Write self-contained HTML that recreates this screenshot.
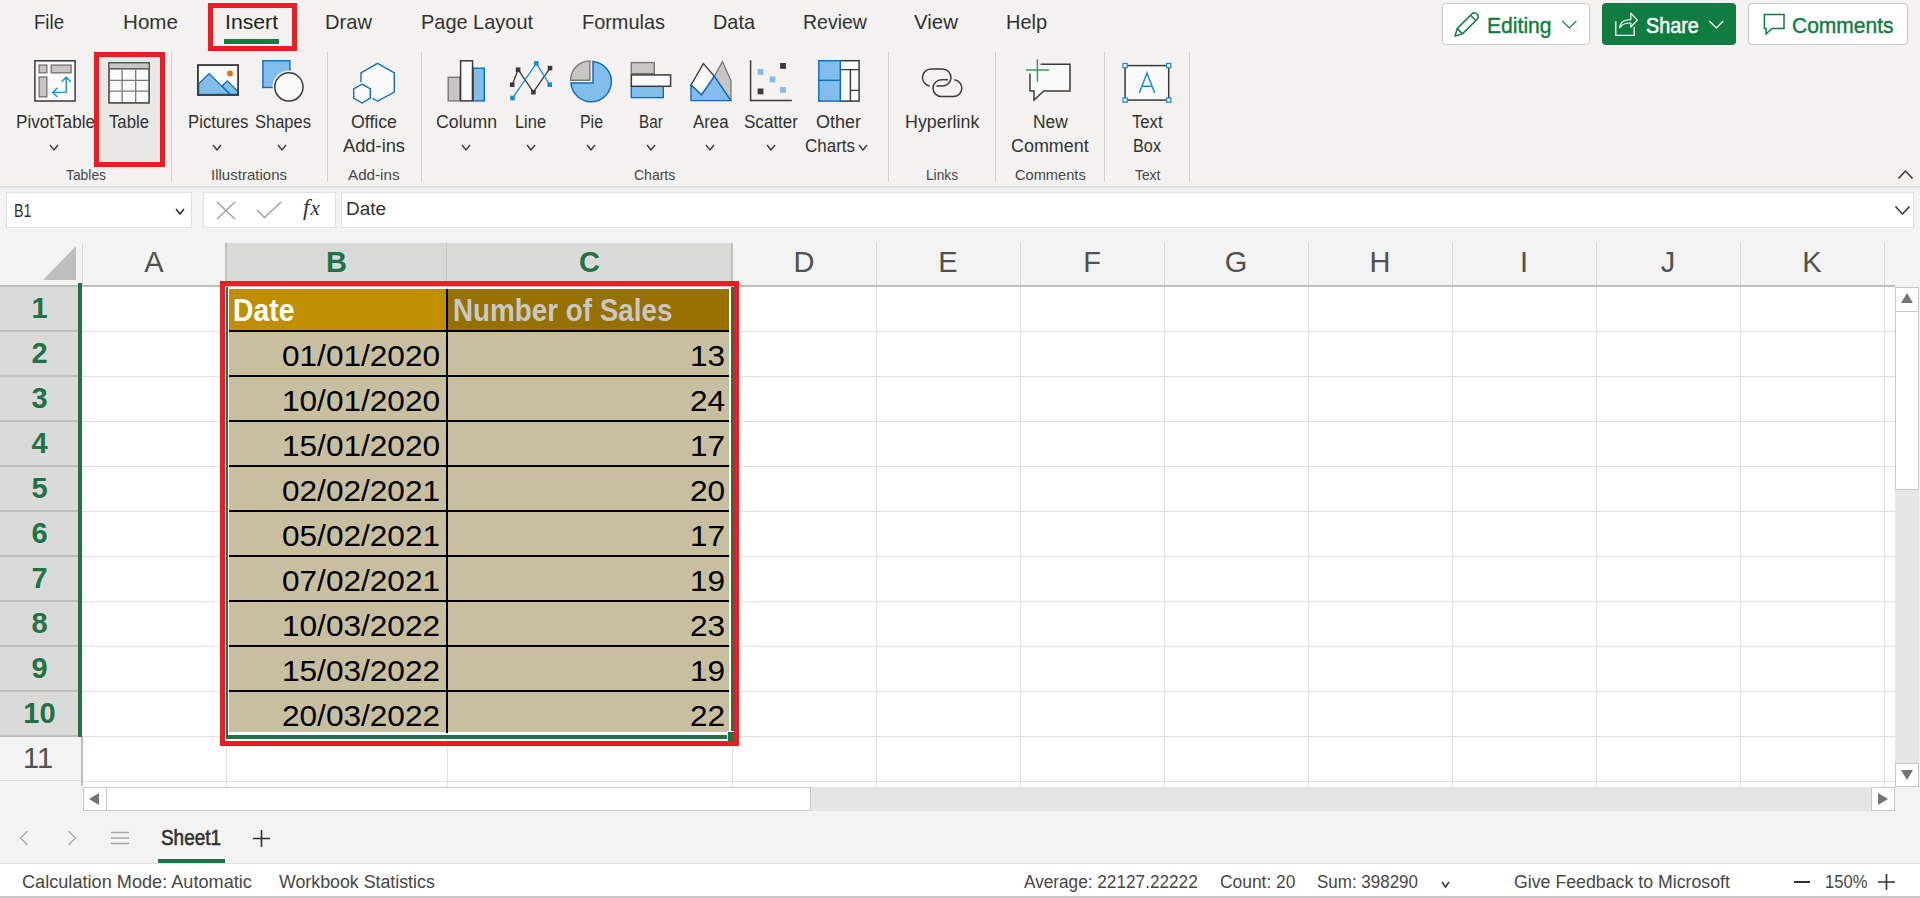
<!DOCTYPE html>
<html><head><meta charset="utf-8"><style>
html,body{margin:0;padding:0;}
body{width:1920px;height:898px;overflow:hidden;position:relative;background:#f3f3f3;font-family:'Liberation Sans',sans-serif;}
.t{position:absolute;line-height:1;white-space:nowrap;}
.r{position:absolute;box-sizing:content-box;}
svg.r{overflow:visible;}
</style></head><body>
<div class="r" style="left:0px;top:0px;width:1920px;height:186px;background:#f3f2f1;"></div>
<div class="r" style="left:0px;top:186px;width:1920px;height:4px;background:linear-gradient(#dcdbda,#f3f3f3);"></div>
<div class="r" style="left:0px;top:190px;width:1920px;height:53px;background:#f3f3f3;"></div>
<div class="t" style="left:34.00px;top:11.15px;font-size:21px;color:#323130;font-weight:normal;transform:scaleX(0.8859);transform-origin:0 0;">File</div>
<div class="t" style="left:123.00px;top:11.15px;font-size:21px;color:#323130;font-weight:normal;transform:scaleX(0.9818);transform-origin:0 0;">Home</div>
<div class="t" style="left:225.00px;top:11.15px;font-size:21px;color:#201f1e;font-weight:normal;transform:scaleX(1.0095);transform-origin:0 0;">Insert</div>
<div class="t" style="left:325.00px;top:11.15px;font-size:21px;color:#323130;font-weight:normal;transform:scaleX(0.9575);transform-origin:0 0;">Draw</div>
<div class="t" style="left:421.00px;top:11.15px;font-size:21px;color:#323130;font-weight:normal;transform:scaleX(0.9498);transform-origin:0 0;">Page Layout</div>
<div class="t" style="left:582.00px;top:11.15px;font-size:21px;color:#323130;font-weight:normal;transform:scaleX(0.9484);transform-origin:0 0;">Formulas</div>
<div class="t" style="left:713.00px;top:11.15px;font-size:21px;color:#323130;font-weight:normal;transform:scaleX(0.9467);transform-origin:0 0;">Data</div>
<div class="t" style="left:803.00px;top:11.15px;font-size:21px;color:#323130;font-weight:normal;transform:scaleX(0.9284);transform-origin:0 0;">Review</div>
<div class="t" style="left:914.00px;top:11.15px;font-size:21px;color:#323130;font-weight:normal;transform:scaleX(0.9734);transform-origin:0 0;">View</div>
<div class="t" style="left:1006.00px;top:11.15px;font-size:21px;color:#323130;font-weight:normal;transform:scaleX(0.9489);transform-origin:0 0;">Help</div>
<div class="r" style="left:224px;top:39px;width:55px;height:5px;background:#107c41;"></div>
<div class="r" style="left:1442px;top:3px;width:146px;height:40px;border:1px solid #c8c6c4;background:#ffffff;border-radius:4px;"></div>
<div class="t" style="left:1486.70px;top:15.10px;font-size:22px;color:#107c41;font-weight:normal;transform:scaleX(0.9596);transform-origin:0 0;-webkit-text-stroke:0.4px #107c41;">Editing</div>
<div class="r" style="left:1602px;top:3px;width:134px;height:42px;background:#107c41;border-radius:4px;"></div>
<div class="t" style="left:1646.00px;top:15.10px;font-size:22px;color:#ffffff;font-weight:normal;transform:scaleX(0.8989);transform-origin:0 0;-webkit-text-stroke:0.5px #fff;">Share</div>
<div class="r" style="left:1748px;top:3px;width:158px;height:40px;border:1px solid #c8c6c4;background:#ffffff;border-radius:4px;"></div>
<div class="t" style="left:1792.40px;top:15.10px;font-size:22px;color:#107c41;font-weight:normal;transform:scaleX(0.9552);transform-origin:0 0;-webkit-text-stroke:0.4px #107c41;">Comments</div>
<div class="r" style="left:171px;top:52px;width:1px;height:130px;background:#d2d0ce;"></div>
<div class="r" style="left:327px;top:52px;width:1px;height:130px;background:#d2d0ce;"></div>
<div class="r" style="left:421px;top:52px;width:1px;height:130px;background:#d2d0ce;"></div>
<div class="r" style="left:888px;top:52px;width:1px;height:130px;background:#d2d0ce;"></div>
<div class="r" style="left:995px;top:52px;width:1px;height:130px;background:#d2d0ce;"></div>
<div class="r" style="left:1104px;top:52px;width:1px;height:130px;background:#d2d0ce;"></div>
<div class="r" style="left:1189px;top:52px;width:1px;height:130px;background:#d2d0ce;"></div>
<div class="r" style="left:99px;top:57px;width:61px;height:105px;background:#e9e8e7;"></div>
<div class="t" style="left:15.50px;top:114.12px;font-size:17.5px;color:#323130;font-weight:normal;transform:scaleX(0.9782);transform-origin:0 0;">PivotTable</div>
<div class="t" style="left:109.00px;top:114.12px;font-size:17.5px;color:#323130;font-weight:normal;transform:scaleX(0.9564);transform-origin:0 0;">Table</div>
<div class="t" style="left:187.50px;top:114.12px;font-size:17.5px;color:#323130;font-weight:normal;transform:scaleX(0.9570);transform-origin:0 0;">Pictures</div>
<div class="t" style="left:255.00px;top:114.12px;font-size:17.5px;color:#323130;font-weight:normal;transform:scaleX(0.9433);transform-origin:0 0;">Shapes</div>
<div class="t" style="left:350.75px;top:114.12px;font-size:17.5px;color:#323130;font-weight:normal;transform:scaleX(1.0129);transform-origin:0 0;">Office</div>
<div class="t" style="left:342.50px;top:137.62px;font-size:17.5px;color:#323130;font-weight:normal;transform:scaleX(1.0451);transform-origin:0 0;">Add-ins</div>
<div class="t" style="left:436.00px;top:114.12px;font-size:17.5px;color:#323130;font-weight:normal;transform:scaleX(1.0118);transform-origin:0 0;">Column</div>
<div class="t" style="left:515.00px;top:114.12px;font-size:17.5px;color:#323130;font-weight:normal;transform:scaleX(0.9373);transform-origin:0 0;">Line</div>
<div class="t" style="left:579.50px;top:114.12px;font-size:17.5px;color:#323130;font-weight:normal;transform:scaleX(0.9095);transform-origin:0 0;">Pie</div>
<div class="t" style="left:638.75px;top:114.12px;font-size:17.5px;color:#323130;font-weight:normal;transform:scaleX(0.8728);transform-origin:0 0;">Bar</div>
<div class="t" style="left:692.50px;top:114.12px;font-size:17.5px;color:#323130;font-weight:normal;transform:scaleX(0.9603);transform-origin:0 0;">Area</div>
<div class="t" style="left:744.00px;top:114.12px;font-size:17.5px;color:#323130;font-weight:normal;transform:scaleX(0.9742);transform-origin:0 0;">Scatter</div>
<div class="t" style="left:816.00px;top:114.12px;font-size:17.5px;color:#323130;font-weight:normal;transform:scaleX(1.0286);transform-origin:0 0;">Other</div>
<div class="t" style="left:805.00px;top:137.62px;font-size:17.5px;color:#323130;font-weight:normal;transform:scaleX(0.9702);transform-origin:0 0;">Charts</div>
<div class="t" style="left:905.00px;top:114.12px;font-size:17.5px;color:#323130;font-weight:normal;transform:scaleX(1.0195);transform-origin:0 0;">Hyperlink</div>
<div class="t" style="left:1032.80px;top:114.12px;font-size:17.5px;color:#323130;font-weight:normal;transform:scaleX(0.9930);transform-origin:0 0;">New</div>
<div class="t" style="left:1011.00px;top:137.62px;font-size:17.5px;color:#323130;font-weight:normal;transform:scaleX(1.0242);transform-origin:0 0;">Comment</div>
<div class="t" style="left:1132.00px;top:114.12px;font-size:17.5px;color:#323130;font-weight:normal;transform:scaleX(0.9529);transform-origin:0 0;">Text</div>
<div class="t" style="left:1133.00px;top:137.62px;font-size:17.5px;color:#323130;font-weight:normal;transform:scaleX(0.9289);transform-origin:0 0;">Box</div>
<div class="t" style="left:65.50px;top:168.18px;font-size:14.5px;color:#484644;font-weight:normal;transform:scaleX(0.9545);transform-origin:0 0;">Tables</div>
<div class="t" style="left:211.00px;top:168.18px;font-size:14.5px;color:#484644;font-weight:normal;transform:scaleX(1.0364);transform-origin:0 0;">Illustrations</div>
<div class="t" style="left:348.00px;top:168.18px;font-size:14.5px;color:#484644;font-weight:normal;transform:scaleX(1.0477);transform-origin:0 0;">Add-ins</div>
<div class="t" style="left:633.75px;top:168.18px;font-size:14.5px;color:#484644;font-weight:normal;transform:scaleX(0.9660);transform-origin:0 0;">Charts</div>
<div class="t" style="left:926.00px;top:168.18px;font-size:14.5px;color:#484644;font-weight:normal;transform:scaleX(0.9451);transform-origin:0 0;">Links</div>
<div class="t" style="left:1014.70px;top:168.18px;font-size:14.5px;color:#484644;font-weight:normal;transform:scaleX(1.0085);transform-origin:0 0;">Comments</div>
<div class="t" style="left:1134.60px;top:168.18px;font-size:14.5px;color:#484644;font-weight:normal;transform:scaleX(0.9546);transform-origin:0 0;">Text</div>
<svg class="r" style="left:49.0px;top:143.5px;" width="10" height="7" viewBox="0 0 10 7"><path d="M1 1 L5.0 6 L9 1" fill="none" stroke="#323130" stroke-width="1.3"/></svg>
<svg class="r" style="left:212.25px;top:143.5px;" width="10" height="7" viewBox="0 0 10 7"><path d="M1 1 L5.0 6 L9 1" fill="none" stroke="#323130" stroke-width="1.3"/></svg>
<svg class="r" style="left:277.25px;top:143.5px;" width="10" height="7" viewBox="0 0 10 7"><path d="M1 1 L5.0 6 L9 1" fill="none" stroke="#323130" stroke-width="1.3"/></svg>
<svg class="r" style="left:461.0px;top:143.5px;" width="10" height="7" viewBox="0 0 10 7"><path d="M1 1 L5.0 6 L9 1" fill="none" stroke="#323130" stroke-width="1.3"/></svg>
<svg class="r" style="left:525.5px;top:143.5px;" width="10" height="7" viewBox="0 0 10 7"><path d="M1 1 L5.0 6 L9 1" fill="none" stroke="#323130" stroke-width="1.3"/></svg>
<svg class="r" style="left:586.0px;top:143.5px;" width="10" height="7" viewBox="0 0 10 7"><path d="M1 1 L5.0 6 L9 1" fill="none" stroke="#323130" stroke-width="1.3"/></svg>
<svg class="r" style="left:645.5px;top:143.5px;" width="10" height="7" viewBox="0 0 10 7"><path d="M1 1 L5.0 6 L9 1" fill="none" stroke="#323130" stroke-width="1.3"/></svg>
<svg class="r" style="left:705.25px;top:143.5px;" width="10" height="7" viewBox="0 0 10 7"><path d="M1 1 L5.0 6 L9 1" fill="none" stroke="#323130" stroke-width="1.3"/></svg>
<svg class="r" style="left:766.0px;top:143.5px;" width="10" height="7" viewBox="0 0 10 7"><path d="M1 1 L5.0 6 L9 1" fill="none" stroke="#323130" stroke-width="1.3"/></svg>
<svg class="r" style="left:857.5px;top:144.0px;" width="10" height="7" viewBox="0 0 10 7"><path d="M1 1 L5.0 6 L9 1" fill="none" stroke="#323130" stroke-width="1.3"/></svg>
<svg class="r" style="left:1897px;top:169px;" width="17" height="11" viewBox="0 0 17 11"><path d="M1.5 9.5 L8.5 2 L15.5 9.5" fill="none" stroke="#323130" stroke-width="1.5"/></svg>
<svg class="r" style="left:0;top:0" width="1920" height="190"><rect x="34.9" y="60.8" width="40.2" height="40.2" fill="#fafafa" stroke="#3b3a39" stroke-width="1.5"/><rect x="39.1" y="65.1" width="7.7" height="7.7" fill="#c8c6c4" stroke="#7a7876" stroke-width="1.4"/><rect x="51.2" y="65.1" width="19.9" height="7.7" fill="#c8c6c4" stroke="#7a7876" stroke-width="1.4"/><rect x="39.1" y="77" width="7.7" height="19.8" fill="#c8c6c4" stroke="#7a7876" stroke-width="1.4"/><path d="M66.2 77.2 V92.4 H52.8 M61.6 81.8 L66.2 77.2 L70.8 81.8 M57.4 87.8 L52.8 92.4 L57.4 97" fill="none" stroke="#1e8ad6" stroke-width="1.4"/><rect x="109" y="62.9" width="40.1" height="40" fill="#fafafa" stroke="#3b3a39" stroke-width="1.5"/><rect x="109.7" y="63.6" width="38.7" height="5" fill="#c8c6c4"/><path d="M109.7 68.9 H148.4" stroke="#3b3a39" stroke-width="1.3"/><path d="M122.1 69.5 V102.2 M135.7 69.5 V102.2 M109.7 80.4 H148.4 M109.7 91.2 H148.4" stroke="#7a7876" stroke-width="1.3"/><rect x="197.9" y="65.1" width="40.3" height="29.9" fill="#fafafa" stroke="#3b3a39" stroke-width="1.5"/><path d="M198.6 84 L209.1 73.6 L230 94.3 H198.6 Z" fill="#83bdeb" stroke="#0f6cbd" stroke-width="1.3" stroke-linejoin="miter"/><path d="M222 86 L227.2 80.8 L237.5 91 V94.3 H230.2 Z" fill="#83bdeb" stroke="#0f6cbd" stroke-width="1.3"/><rect x="197.9" y="65.1" width="40.3" height="29.9" fill="none" stroke="#3b3a39" stroke-width="1.5"/><circle cx="230" cy="73.5" r="2.9" fill="#e3700c"/><rect x="262.9" y="60.7" width="27" height="26.8" fill="#83bdeb" stroke="#0f6cbd" stroke-width="1.4"/><circle cx="288.9" cy="86.9" r="16.3" fill="#f3f2f1"/><circle cx="288.9" cy="86.9" r="14.1" fill="#fafafa" stroke="#3b3a39" stroke-width="1.5"/><path d="M377.6 63.4 L394.3 73 V92 L377.6 101 L361 92 V73 Z" fill="#fafafa" stroke="#0f6cbd" stroke-width="1.4"/><path d="M362 81.5 L372.5 87.5 V99.5 L362 105.5 L351.5 99.5 V87.5 Z" fill="#f3f2f1"/><path d="M362 84.2 L370.3 89 V98.2 L362 103 L353.7 98.2 V89 Z" fill="#fafafa" stroke="#0f6cbd" stroke-width="1.4"/><rect x="448.2" y="77.3" width="11.7" height="23.6" fill="#c8c6c4" stroke="#7a7876" stroke-width="1.4"/><rect x="460.6" y="60.8" width="12" height="40.1" fill="#fafafa" stroke="#3b3a39" stroke-width="1.5"/><rect x="473.3" y="68.2" width="11" height="32.7" fill="#83bdeb" stroke="#0f6cbd" stroke-width="1.4"/><path d="M472.6 68.2 V100.9" stroke="#3b3a39" stroke-width="1.5"/><path d="M512.3 84.7 L518.1 69.7 L533.4 92.2 L550 68.1" fill="none" stroke="#3b3a39" stroke-width="1.3"/><path d="M512.5 98.1 L536.3 63.4 L549.7 84.7" fill="none" stroke="#1e8ad6" stroke-width="1.3"/><rect x="509.90000000000003" y="82.4" width="4.6" height="4.6" fill="#3b3a39"/><rect x="515.8000000000001" y="67.4" width="4.6" height="4.6" fill="#3b3a39"/><rect x="531.1" y="89.9" width="4.6" height="4.6" fill="#3b3a39"/><rect x="547.7" y="65.8" width="4.6" height="4.6" fill="#3b3a39"/><rect x="510.2" y="95.8" width="4.6" height="4.6" fill="#1e8ad6"/><rect x="534.0" y="61.1" width="4.6" height="4.6" fill="#1e8ad6"/><rect x="547.4000000000001" y="82.4" width="4.6" height="4.6" fill="#1e8ad6"/><path d="M593 61.4 A20.2 20.2 0 1 1 571 83 H593 Z" fill="#83bdeb" stroke="#0f6cbd" stroke-width="1.5" stroke-linejoin="miter"/><path d="M589.9 60.9 A19.5 19.5 0 0 0 570.6 80.2 H589.9 Z" fill="#c8c6c4" stroke="#7a7876" stroke-width="1.4"/><rect x="631.3" y="62.6" width="23" height="11" fill="#c8c6c4" stroke="#7a7876" stroke-width="1.4"/><rect x="631.3" y="86.3" width="32" height="11.3" fill="#83bdeb" stroke="#0f6cbd" stroke-width="1.4"/><rect x="631.3" y="74.9" width="39.3" height="11.4" fill="#fafafa" stroke="#3b3a39" stroke-width="1.5"/><path d="M714.4 76.3 L722.5 61.6 L731 81 V100.6 Z" fill="#c8c6c4" stroke="#7a7876" stroke-width="1.3" stroke-linejoin="round"/><path d="M691 85 L703.4 63.6 L714.4 76.3 L701.6 95 Z" fill="#fafafa" stroke="#3b3a39" stroke-width="1.4"/><path d="M691 85 L701.6 95 L714.4 76.3 L730.8 100.6 H691 Z" fill="#83bdeb" stroke="#0f6cbd" stroke-width="1.4" stroke-linejoin="miter"/><path d="M750.6 60.3 V100.6 H791.9" fill="none" stroke="#3b3a39" stroke-width="1.5"/><rect x="757.6" y="69.0" width="5.8" height="5.8" fill="#83bdeb"/><rect x="769.6" y="76.5" width="5.8" height="5.8" fill="#83bdeb"/><rect x="780.1" y="63.00000000000001" width="5.8" height="5.8" fill="#3b3a39"/><rect x="757.6" y="88.5" width="5.8" height="5.8" fill="#3b3a39"/><rect x="780.1" y="87.1" width="5.8" height="5.8" fill="#83bdeb"/><rect x="840.3" y="60.7" width="18.8" height="40.4" fill="#fafafa" stroke="#3b3a39" stroke-width="1.5"/><path d="M840.3 69.6 H859.1 M850.4 69.6 V101.1 M850.4 90.4 H859.1" stroke="#3b3a39" stroke-width="1.4"/><rect x="818.8" y="60.7" width="21.5" height="40.4" fill="#83bdeb" stroke="#0f6cbd" stroke-width="1.4"/><path d="M818.8 80.3 H840.3" stroke="#0f6cbd" stroke-width="1.4"/><path d="M936.4 86 H942.55 A8.45 8.45 0 0 0 942.55 69.1 H930.85 A8.45 8.45 0 0 0 929.6 85.9" fill="none" stroke="#3b3a39" stroke-width="1.5"/><path d="M954.3 79.75 A8.45 8.45 0 0 1 953.45 96.6 H941.45 A8.45 8.45 0 0 1 941.45 79.7 H947.9" fill="none" stroke="#3b3a39" stroke-width="1.5"/><path d="M1030 73.4 V90.9 H1034 V100 L1043.7 90.9 H1070 V64.2 H1040.6" fill="#fafafa" stroke="#3b3a39" stroke-width="1.5"/><rect x="1030.7" y="64.9" width="11" height="10" fill="#fafafa"/><path d="M1037.4 59.2 V81.7 M1026.1 70.1 H1049" stroke="#31a24f" stroke-width="1.5"/><rect x="1125.1" y="65.6" width="43.6" height="34.5" fill="#fafafa" stroke="#3b3a39" stroke-width="1.5"/><rect x="1123.0" y="63.49999999999999" width="4.2" height="4.2" fill="#ffffff" stroke="#1e8ad6" stroke-width="1.3"/><rect x="1166.6000000000001" y="63.49999999999999" width="4.2" height="4.2" fill="#ffffff" stroke="#1e8ad6" stroke-width="1.3"/><rect x="1123.0" y="98.0" width="4.2" height="4.2" fill="#ffffff" stroke="#1e8ad6" stroke-width="1.3"/><rect x="1166.6000000000001" y="98.0" width="4.2" height="4.2" fill="#ffffff" stroke="#1e8ad6" stroke-width="1.3"/><path d="M1139.3 93 L1147 73 L1154.7 93 M1142.3 86.2 H1151.7" fill="none" stroke="#1e8ad6" stroke-width="1.5"/><path d="M1455 36 L1457.2 28.6 L1471.8 14 A3.75 3.75 0 0 1 1477.1 19.3 L1462.5 33.9 Z M1457.2 28.6 L1462.5 33.9 M1470.6 15.3 L1475.8 20.5" fill="none" stroke="#107c41" stroke-width="1.5" stroke-linejoin="round"/><path d="M1562.2 20.8 L1569.3 27.9 L1576.4 20.8" fill="none" stroke="#107c41" stroke-width="1.2"/><path d="M1615.8 21.3 V35.3 H1634.2 V27" fill="none" stroke="#fff" stroke-width="1.3"/><path d="M1619.6 27.6 C1620.5 21.5 1625 19.5 1630.8 19.8 V13.2 L1637.3 20.2 L1630.8 27 V23 C1625.5 22.8 1622 24.5 1619.6 27.6 Z" fill="none" stroke="#fff" stroke-width="1.2" stroke-linejoin="round"/><path d="M1709.3 21 L1716.3 28 L1723.3 21" fill="none" stroke="#fff" stroke-width="1.2"/><path d="M1766.1 28.4 H1764.4 V14.4 H1784 V28.4 H1771.9 L1766.1 34 Z" fill="none" stroke="#107c41" stroke-width="1.5"/></svg>
<div class="r" style="left:208px;top:3px;width:79px;height:38px;border:5px solid #ec1c24;background:transparent;"></div>
<div class="r" style="left:94px;top:52px;width:61px;height:105px;border:5px solid #ec1c24;background:transparent;"></div>
<div class="r" style="left:6px;top:192px;width:184px;height:34px;border:1px solid #e1dfdd;background:#ffffff;"></div>
<div class="t" style="left:13.50px;top:202.40px;font-size:18px;color:#323130;font-weight:normal;transform:scaleX(0.7953);transform-origin:0 0;">B1</div>
<svg class="r" style="left:175.0px;top:207.8px;" width="10" height="7" viewBox="0 0 10 7"><path d="M1 1 L5.0 6 L9 1" fill="none" stroke="#323130" stroke-width="1.6"/></svg>
<div class="r" style="left:203px;top:192px;width:131px;height:34px;border:1px solid #e1dfdd;background:#ffffff;"></div>
<svg class="r" style="left:216px;top:201px;" width="20" height="19" viewBox="0 0 20 19"><path d="M1 1 L19 18 M19 1 L1 18" stroke="#a19f9d" stroke-width="1.4" fill="none"/></svg>
<svg class="r" style="left:256px;top:201px;" width="26" height="18" viewBox="0 0 26 18"><path d="M1 9 L8.5 16.5 L25 1" stroke="#a19f9d" stroke-width="1.4" fill="none"/></svg>
<div class="t" style="left:303px;top:196.45px;font-size:23px;color:#323130;font-weight:normal;font-family:'Liberation Serif',serif;font-style:italic;letter-spacing:1px;">f<span style="font-size:21px">x</span></div>
<div class="r" style="left:341px;top:192px;width:1571px;height:34px;border:1px solid #e1dfdd;background:#ffffff;"></div>
<div class="t" style="left:346.00px;top:200.28px;font-size:18.5px;color:#323130;font-weight:normal;transform:scaleX(1.0235);transform-origin:0 0;">Date</div>
<svg class="r" style="left:1894px;top:205px;" width="17" height="11" viewBox="0 0 17 11"><path d="M1.5 1.5 L8.5 9 L15.5 1.5" fill="none" stroke="#323130" stroke-width="1.5"/></svg>
<div class="r" style="left:82px;top:287px;width:1813px;height:500px;background:#ffffff;"></div>
<div class="r" style="left:226px;top:243px;width:506px;height:43px;background:#dadad9;"></div>
<div class="r" style="left:0px;top:287px;width:78px;height:449px;background:#dadad9;"></div>
<div class="r" style="left:82px;top:331px;width:1813px;height:1px;background:#e1e1e1;"></div>
<div class="r" style="left:82px;top:376px;width:1813px;height:1px;background:#e1e1e1;"></div>
<div class="r" style="left:82px;top:421px;width:1813px;height:1px;background:#e1e1e1;"></div>
<div class="r" style="left:82px;top:466px;width:1813px;height:1px;background:#e1e1e1;"></div>
<div class="r" style="left:82px;top:511px;width:1813px;height:1px;background:#e1e1e1;"></div>
<div class="r" style="left:82px;top:556px;width:1813px;height:1px;background:#e1e1e1;"></div>
<div class="r" style="left:82px;top:601px;width:1813px;height:1px;background:#e1e1e1;"></div>
<div class="r" style="left:82px;top:646px;width:1813px;height:1px;background:#e1e1e1;"></div>
<div class="r" style="left:82px;top:691px;width:1813px;height:1px;background:#e1e1e1;"></div>
<div class="r" style="left:82px;top:736px;width:1813px;height:1px;background:#e1e1e1;"></div>
<div class="r" style="left:82px;top:781px;width:1813px;height:1px;background:#e1e1e1;"></div>
<div class="r" style="left:226px;top:287px;width:1px;height:500px;background:#e1e1e1;"></div>
<div class="r" style="left:447px;top:287px;width:1px;height:500px;background:#e1e1e1;"></div>
<div class="r" style="left:732px;top:287px;width:1px;height:500px;background:#e1e1e1;"></div>
<div class="r" style="left:876px;top:287px;width:1px;height:500px;background:#e1e1e1;"></div>
<div class="r" style="left:1020px;top:287px;width:1px;height:500px;background:#e1e1e1;"></div>
<div class="r" style="left:1164px;top:287px;width:1px;height:500px;background:#e1e1e1;"></div>
<div class="r" style="left:1308px;top:287px;width:1px;height:500px;background:#e1e1e1;"></div>
<div class="r" style="left:1452px;top:287px;width:1px;height:500px;background:#e1e1e1;"></div>
<div class="r" style="left:1596px;top:287px;width:1px;height:500px;background:#e1e1e1;"></div>
<div class="r" style="left:1740px;top:287px;width:1px;height:500px;background:#e1e1e1;"></div>
<div class="r" style="left:1884px;top:287px;width:1px;height:500px;background:#e1e1e1;"></div>
<div class="r" style="left:82px;top:243px;width:1px;height:42px;background:#d6d6d6;"></div>
<div class="r" style="left:225px;top:243px;width:2px;height:42px;background:#c2c2c2;"></div>
<div class="r" style="left:446px;top:243px;width:1px;height:42px;background:#c8c8c8;"></div>
<div class="r" style="left:731px;top:243px;width:2px;height:42px;background:#c2c2c2;"></div>
<div class="r" style="left:876px;top:243px;width:1px;height:42px;background:#d6d6d6;"></div>
<div class="r" style="left:1020px;top:243px;width:1px;height:42px;background:#d6d6d6;"></div>
<div class="r" style="left:1164px;top:243px;width:1px;height:42px;background:#d6d6d6;"></div>
<div class="r" style="left:1308px;top:243px;width:1px;height:42px;background:#d6d6d6;"></div>
<div class="r" style="left:1452px;top:243px;width:1px;height:42px;background:#d6d6d6;"></div>
<div class="r" style="left:1596px;top:243px;width:1px;height:42px;background:#d6d6d6;"></div>
<div class="r" style="left:1740px;top:243px;width:1px;height:42px;background:#d6d6d6;"></div>
<div class="r" style="left:1884px;top:243px;width:1px;height:42px;background:#d6d6d6;"></div>
<div class="r" style="left:0px;top:285px;width:1895px;height:2px;background:#bdbdbd;"></div>
<div class="r" style="left:0px;top:330px;width:78px;height:2px;background:#bdbdbd;"></div>
<div class="r" style="left:0px;top:375px;width:78px;height:2px;background:#bdbdbd;"></div>
<div class="r" style="left:0px;top:420px;width:78px;height:2px;background:#bdbdbd;"></div>
<div class="r" style="left:0px;top:465px;width:78px;height:2px;background:#bdbdbd;"></div>
<div class="r" style="left:0px;top:510px;width:78px;height:2px;background:#bdbdbd;"></div>
<div class="r" style="left:0px;top:555px;width:78px;height:2px;background:#bdbdbd;"></div>
<div class="r" style="left:0px;top:600px;width:78px;height:2px;background:#bdbdbd;"></div>
<div class="r" style="left:0px;top:645px;width:78px;height:2px;background:#bdbdbd;"></div>
<div class="r" style="left:0px;top:690px;width:78px;height:2px;background:#bdbdbd;"></div>
<div class="r" style="left:0px;top:735px;width:78px;height:2px;background:#bdbdbd;"></div>
<div class="r" style="left:0px;top:780px;width:80px;height:1px;background:#d4d4d4;"></div>
<div class="r" style="left:81px;top:736px;width:2px;height:50px;background:#bdbdbd;"></div>
<svg class="r" style="left:43px;top:246px;" width="33" height="34" viewBox="0 0 33 34"><path d="M33 0 L33 34 L0 34 Z" fill="#bfbfbf"/></svg>
<div class="r" style="left:78px;top:283px;width:4px;height:454px;background:#217346;"></div>
<div class="t" style="left:154.0px;transform:translateX(-50%);top:248.35px;font-size:29px;color:#505050;font-weight:normal;">A</div>
<div class="t" style="left:336.5px;transform:translateX(-50%);top:248.35px;font-size:29px;color:#217346;font-weight:bold;">B</div>
<div class="t" style="left:589.5px;transform:translateX(-50%);top:248.35px;font-size:29px;color:#217346;font-weight:bold;">C</div>
<div class="t" style="left:804.0px;transform:translateX(-50%);top:248.35px;font-size:29px;color:#505050;font-weight:normal;">D</div>
<div class="t" style="left:948.0px;transform:translateX(-50%);top:248.35px;font-size:29px;color:#505050;font-weight:normal;">E</div>
<div class="t" style="left:1092.0px;transform:translateX(-50%);top:248.35px;font-size:29px;color:#505050;font-weight:normal;">F</div>
<div class="t" style="left:1236.0px;transform:translateX(-50%);top:248.35px;font-size:29px;color:#505050;font-weight:normal;">G</div>
<div class="t" style="left:1380.0px;transform:translateX(-50%);top:248.35px;font-size:29px;color:#505050;font-weight:normal;">H</div>
<div class="t" style="left:1524.0px;transform:translateX(-50%);top:248.35px;font-size:29px;color:#505050;font-weight:normal;">I</div>
<div class="t" style="left:1668.0px;transform:translateX(-50%);top:248.35px;font-size:29px;color:#505050;font-weight:normal;">J</div>
<div class="t" style="left:1812.0px;transform:translateX(-50%);top:248.35px;font-size:29px;color:#505050;font-weight:normal;">K</div>
<div class="t" style="left:39.5px;transform:translateX(-50%);top:294.35px;font-size:29px;color:#217346;font-weight:bold;">1</div>
<div class="t" style="left:39.5px;transform:translateX(-50%);top:339.35px;font-size:29px;color:#217346;font-weight:bold;">2</div>
<div class="t" style="left:39.5px;transform:translateX(-50%);top:384.35px;font-size:29px;color:#217346;font-weight:bold;">3</div>
<div class="t" style="left:39.5px;transform:translateX(-50%);top:429.35px;font-size:29px;color:#217346;font-weight:bold;">4</div>
<div class="t" style="left:39.5px;transform:translateX(-50%);top:474.35px;font-size:29px;color:#217346;font-weight:bold;">5</div>
<div class="t" style="left:39.5px;transform:translateX(-50%);top:519.35px;font-size:29px;color:#217346;font-weight:bold;">6</div>
<div class="t" style="left:39.5px;transform:translateX(-50%);top:564.35px;font-size:29px;color:#217346;font-weight:bold;">7</div>
<div class="t" style="left:39.5px;transform:translateX(-50%);top:609.35px;font-size:29px;color:#217346;font-weight:bold;">8</div>
<div class="t" style="left:39.5px;transform:translateX(-50%);top:654.35px;font-size:29px;color:#217346;font-weight:bold;">9</div>
<div class="t" style="left:39.5px;transform:translateX(-50%);top:699.35px;font-size:29px;color:#217346;font-weight:bold;">10</div>
<div class="t" style="left:38px;transform:translateX(-50%);top:744.35px;font-size:29px;color:#505050;font-weight:normal;">11</div>
<div class="r" style="left:229px;top:289px;width:217px;height:41px;background:#bf8f00;"></div>
<div class="r" style="left:448px;top:289px;width:281px;height:41px;background:#967000;"></div>
<div class="r" style="left:229px;top:330px;width:500px;height:402px;background:#c8bfa1;"></div>
<div class="r" style="left:446px;top:289px;width:2px;height:444px;background:#000000;"></div>
<div class="r" style="left:229px;top:330px;width:500px;height:2px;background:#000000;"></div>
<div class="r" style="left:229px;top:375px;width:500px;height:2px;background:#000000;"></div>
<div class="r" style="left:229px;top:420px;width:500px;height:2px;background:#000000;"></div>
<div class="r" style="left:229px;top:465px;width:500px;height:2px;background:#000000;"></div>
<div class="r" style="left:229px;top:510px;width:500px;height:2px;background:#000000;"></div>
<div class="r" style="left:229px;top:555px;width:500px;height:2px;background:#000000;"></div>
<div class="r" style="left:229px;top:600px;width:500px;height:2px;background:#000000;"></div>
<div class="r" style="left:229px;top:645px;width:500px;height:2px;background:#000000;"></div>
<div class="r" style="left:229px;top:690px;width:500px;height:2px;background:#000000;"></div>
<div class="r" style="left:226px;top:287px;width:2px;height:449px;background:#217346;"></div>
<div class="r" style="left:731px;top:287px;width:3px;height:454px;background:#217346;"></div>
<div class="r" style="left:226px;top:735px;width:508px;height:4px;background:#217346;"></div>
<div class="r" style="left:728px;top:732px;width:6px;height:9px;background:#217346;outline:1px solid #fff;"></div>
<div class="t" style="left:232.60px;top:295.45px;font-size:31px;color:#ffffff;font-weight:bold;transform:scaleX(0.9138);transform-origin:0 0;">Date</div>
<div class="t" style="left:452.50px;top:294.65px;font-size:31px;color:#c8c8c8;font-weight:bold;transform:scaleX(0.8971);transform-origin:0 0;">Number of Sales</div>
<div class="t" style="left:282.00px;top:340.50px;font-size:30px;color:#000000;font-weight:normal;transform:scaleX(1.0523);transform-origin:0 0;">01/01/2020</div>
<div class="t" style="left:689.88px;top:340.50px;font-size:30px;color:#000000;font-weight:normal;transform:scaleX(1.0523);transform-origin:0 0;">13</div>
<div class="t" style="left:282.00px;top:385.50px;font-size:30px;color:#000000;font-weight:normal;transform:scaleX(1.0523);transform-origin:0 0;">10/01/2020</div>
<div class="t" style="left:689.88px;top:385.50px;font-size:30px;color:#000000;font-weight:normal;transform:scaleX(1.0523);transform-origin:0 0;">24</div>
<div class="t" style="left:282.00px;top:430.50px;font-size:30px;color:#000000;font-weight:normal;transform:scaleX(1.0523);transform-origin:0 0;">15/01/2020</div>
<div class="t" style="left:689.88px;top:430.50px;font-size:30px;color:#000000;font-weight:normal;transform:scaleX(1.0523);transform-origin:0 0;">17</div>
<div class="t" style="left:282.00px;top:475.50px;font-size:30px;color:#000000;font-weight:normal;transform:scaleX(1.0523);transform-origin:0 0;">02/02/2021</div>
<div class="t" style="left:689.88px;top:475.50px;font-size:30px;color:#000000;font-weight:normal;transform:scaleX(1.0523);transform-origin:0 0;">20</div>
<div class="t" style="left:282.00px;top:520.50px;font-size:30px;color:#000000;font-weight:normal;transform:scaleX(1.0523);transform-origin:0 0;">05/02/2021</div>
<div class="t" style="left:689.88px;top:520.50px;font-size:30px;color:#000000;font-weight:normal;transform:scaleX(1.0523);transform-origin:0 0;">17</div>
<div class="t" style="left:282.00px;top:565.50px;font-size:30px;color:#000000;font-weight:normal;transform:scaleX(1.0523);transform-origin:0 0;">07/02/2021</div>
<div class="t" style="left:689.88px;top:565.50px;font-size:30px;color:#000000;font-weight:normal;transform:scaleX(1.0523);transform-origin:0 0;">19</div>
<div class="t" style="left:282.00px;top:610.50px;font-size:30px;color:#000000;font-weight:normal;transform:scaleX(1.0523);transform-origin:0 0;">10/03/2022</div>
<div class="t" style="left:689.88px;top:610.50px;font-size:30px;color:#000000;font-weight:normal;transform:scaleX(1.0523);transform-origin:0 0;">23</div>
<div class="t" style="left:282.00px;top:655.50px;font-size:30px;color:#000000;font-weight:normal;transform:scaleX(1.0523);transform-origin:0 0;">15/03/2022</div>
<div class="t" style="left:689.88px;top:655.50px;font-size:30px;color:#000000;font-weight:normal;transform:scaleX(1.0523);transform-origin:0 0;">19</div>
<div class="t" style="left:282.00px;top:700.50px;font-size:30px;color:#000000;font-weight:normal;transform:scaleX(1.0523);transform-origin:0 0;">20/03/2022</div>
<div class="t" style="left:689.88px;top:700.50px;font-size:30px;color:#000000;font-weight:normal;transform:scaleX(1.0523);transform-origin:0 0;">22</div>
<div class="r" style="left:220px;top:281px;width:509px;height:455px;border:5px solid #ec1c24;background:transparent;"></div>
<div class="r" style="left:1895px;top:287px;width:24px;height:500px;background:#e6e6e6;"></div>
<div class="r" style="left:1895px;top:311px;width:22px;height:177px;border:1px solid #c6c8ca;background:#ffffff;"></div>
<div class="r" style="left:1895px;top:287px;width:22px;height:23px;border:1px solid #c6c8ca;background:#ffffff;"></div>
<div class="r" style="left:1895px;top:763px;width:22px;height:22px;border:1px solid #c6c8ca;background:#ffffff;"></div>
<svg class="r" style="left:1901px;top:293px;" width="12" height="10" viewBox="0 0 12 10"><path d="M6 0 L12 10 L0 10 Z" fill="#757575"/></svg>
<svg class="r" style="left:1901px;top:770px;" width="12" height="10" viewBox="0 0 12 10"><path d="M0 0 L12 0 L6 10 Z" fill="#757575"/></svg>
<div class="r" style="left:83px;top:787px;width:1788px;height:24px;background:#e6e6e6;"></div>
<div class="r" style="left:106px;top:787px;width:703px;height:22px;border:1px solid #c6c8ca;background:#ffffff;"></div>
<div class="r" style="left:83px;top:787px;width:22px;height:22px;border:1px solid #c6c8ca;background:#ffffff;"></div>
<div class="r" style="left:1871px;top:787px;width:22px;height:22px;border:1px solid #c6c8ca;background:#ffffff;"></div>
<svg class="r" style="left:89px;top:793px;" width="10" height="12" viewBox="0 0 10 12"><path d="M0 6 L10 0 L10 12 Z" fill="#757575"/></svg>
<svg class="r" style="left:1878px;top:793px;" width="10" height="12" viewBox="0 0 10 12"><path d="M0 0 L10 6 L0 12 Z" fill="#757575"/></svg>
<svg class="r" style="left:19px;top:830px;" width="10" height="16" viewBox="0 0 10 16"><path d="M8.5 1 L1.5 8 L8.5 15" fill="none" stroke="#a6a6a6" stroke-width="1.3"/></svg>
<svg class="r" style="left:67px;top:830px;" width="10" height="16" viewBox="0 0 10 16"><path d="M1.5 1 L8.5 8 L1.5 15" fill="none" stroke="#a6a6a6" stroke-width="1.3"/></svg>
<svg class="r" style="left:111px;top:831px;" width="19" height="14" viewBox="0 0 19 14"><path d="M0 1.5 H18 M0 7 H18 M0 12.5 H18" fill="none" stroke="#a6a6a6" stroke-width="1.3"/></svg>
<div class="t" style="left:160.80px;top:827.30px;font-size:22px;color:#323130;font-weight:normal;transform:scaleX(0.8603);transform-origin:0 0;-webkit-text-stroke:0.6px #323130;">Sheet1</div>
<div class="r" style="left:158px;top:859px;width:67px;height:4px;background:#217346;"></div>
<svg class="r" style="left:253px;top:830px;" width="17" height="17" viewBox="0 0 17 17"><path d="M8.5 0 V17 M0 8.5 H17" fill="none" stroke="#323130" stroke-width="1.6"/></svg>
<div class="r" style="left:0px;top:863px;width:1920px;height:1px;background:#e1dfdd;"></div>
<div class="r" style="left:0px;top:864px;width:1920px;height:32px;background:#ffffff;"></div>
<div class="r" style="left:0px;top:896px;width:1920px;height:2px;background:#c8c6c4;"></div>
<div class="t" style="left:21.50px;top:873.40px;font-size:18px;color:#484644;font-weight:normal;transform:scaleX(1.0077);transform-origin:0 0;">Calculation Mode: Automatic</div>
<div class="t" style="left:278.70px;top:873.40px;font-size:18px;color:#484644;font-weight:normal;transform:scaleX(0.9878);transform-origin:0 0;">Workbook Statistics</div>
<div class="t" style="left:1023.75px;top:873.40px;font-size:18px;color:#484644;font-weight:normal;transform:scaleX(0.9555);transform-origin:0 0;">Average: 22127.22222</div>
<div class="t" style="left:1219.50px;top:873.40px;font-size:18px;color:#484644;font-weight:normal;transform:scaleX(0.9670);transform-origin:0 0;">Count: 20</div>
<div class="t" style="left:1317.00px;top:873.40px;font-size:18px;color:#484644;font-weight:normal;transform:scaleX(0.9430);transform-origin:0 0;">Sum: 398290</div>
<svg class="r" style="left:1440.5px;top:880.5px;" width="9" height="7" viewBox="0 0 9 7"><path d="M1 1 L4.5 6 L8 1" fill="none" stroke="#484644" stroke-width="1.8"/></svg>
<div class="t" style="left:1513.90px;top:873.40px;font-size:18px;color:#484644;font-weight:normal;transform:scaleX(0.9854);transform-origin:0 0;">Give Feedback to Microsoft</div>
<div class="r" style="left:1794px;top:881px;width:16px;height:1.5px;background:#323130;"></div>
<div class="t" style="left:1824.90px;top:873.40px;font-size:18px;color:#484644;font-weight:normal;transform:scaleX(0.9210);transform-origin:0 0;">150%</div>
<svg class="r" style="left:1878px;top:874px;" width="17" height="16" viewBox="0 0 17 16"><path d="M8.5 0 V16 M0 8 H17" fill="none" stroke="#323130" stroke-width="1.6"/></svg>
</body></html>
